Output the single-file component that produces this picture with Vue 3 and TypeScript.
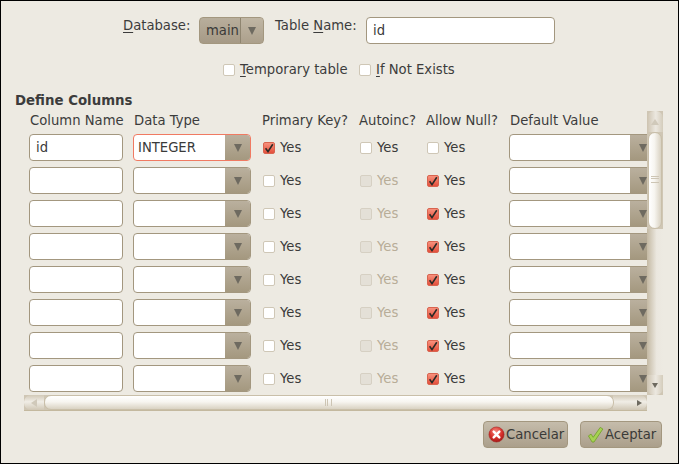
<script setup lang="ts">
const rows = Array.from({ length: 8 }, (_, i) => ({
  name: i === 0 ? 'id' : '',
  type: i === 0 ? 'INTEGER' : '',
  pk: i === 0,
  autoDisabled: i !== 0,
  allowNull: i !== 0,
  focus: i === 0,
}))
</script>

<template>
  <div class="win">
    <div class="top">
      <span class="lbl db"><u>D</u>atabase:</span>
      <span class="dbcombo"><span class="dbval">main</span><span class="dbarrow"><i class="tri"></i></span></span>
      <span class="lbl tn">Table <u>N</u>ame:</span>
      <span class="input tninput">id</span>
    </div>
    <div class="opts">
      <label class="opt"><span class="cb"></span><span class="optext tmp"><u>T</u>emporary table</span></label>
      <label class="opt"><span class="cb"></span><span class="optext"><u>I</u>f Not Exists</span></label>
    </div>
    <div class="section">Define Columns</div>
    <div class="scroller">
      <div class="viewport">
        <div class="inner">
          <div class="row head">
            <span class="c1">Column Name</span>
            <span class="c2">Data Type</span>
            <span class="c3">Primary Key?</span>
            <span class="c4">Autoinc?</span>
            <span class="c5">Allow Null?</span>
            <span class="c6">Default Value</span>
          </div>
          <div v-for="(r, i) in rows" :key="i" class="row">
            <span class="c1"><span class="input nameinput">{{ r.name }}</span></span>
            <span class="c2">
              <span class="combo" :class="{ focus: r.focus }"><span class="cval">{{ r.type }}</span><span class="carrow"><i class="tri"></i></span></span>
            </span>
            <span class="c3 chk"><span class="cb" :class="{ on: r.pk }"><svg v-if="r.pk" viewBox="0 0 12 12"><path d="M2.6 6.2 5 9.6 9.8 2.2" /></svg></span>Yes</span>
            <span class="c4 chk" :class="{ dis: r.autoDisabled }"><span class="cb"></span>Yes</span>
            <span class="c5 chk"><span class="cb" :class="{ on: r.allowNull }"><svg v-if="r.allowNull" viewBox="0 0 12 12"><path d="M2.6 6.2 5 9.6 9.8 2.2" /></svg></span>Yes</span>
            <span class="c6"><span class="combo wide"><span class="cval"></span><span class="carrow"><i class="tri"></i></span></span></span>
          </div>
        </div>
      </div>
      <div class="vbar">
        <span class="step up"><i class="mini mup"></i></span>
        <span class="vthumb"><span class="vgrip"></span></span>
        <span class="vtrack"></span>
        <span class="step down"><i class="mini mdown"></i></span>
      </div>
      <div class="hbar">
        <span class="hstep"><i class="mini mleft"></i></span>
        <span class="hthumb"><span class="hgrip"></span></span>
        <span class="hstep right"><i class="mini mright"></i></span>
      </div>
    </div>
    <div class="actions">
      <button class="btn cancel">
        <svg class="ico" viewBox="0 0 18 18">
          <defs>
            <radialGradient id="redg" cx="45%" cy="30%" r="75%"><stop offset="0" stop-color="#f58a80" /><stop offset=".55" stop-color="#d8322c" /><stop offset="1" stop-color="#9c1414" /></radialGradient>
          </defs>
          <circle cx="9" cy="9" r="8" fill="url(#redg)" stroke="#a32020" stroke-width=".6" />
          <path d="M6 6l6 6M12 6l-6 6" stroke="#fff" stroke-width="2.6" stroke-linecap="round" />
        </svg>Cancelar
      </button>
      <button class="btn ok">
        <svg class="ico" viewBox="0 0 18 18">
          <path d="M1.5 10.5 4.3 8.6 6.6 12 14 1.5 16.8 3.2 7.4 17 5.4 17Z" fill="#a6d252" stroke="#74a02c" stroke-width=".9" stroke-linejoin="round" />
        </svg>Aceptar
      </button>
    </div>
  </div>
</template>

<style>
html, body { margin: 0; padding: 0; background: #edeae2; }
</style>

<style scoped>
.win {
  width: 679px; height: 464px; box-sizing: border-box;
  border: 1px solid #000;
  background: #edeae2; color: #3c3c3c;
  font-family: "DejaVu Sans", sans-serif; font-size: 13.2px;
  display: flex; flex-direction: column; overflow: hidden;
}
u { text-underline-offset: 2px; text-decoration-thickness: 1px; }
.top { display: flex; align-items: flex-start; height: 27px; margin-top: 16px; padding-left: 122px; }
.lbl { line-height: 18px; }
.db { width: 66px; white-space: nowrap; }
.tn { width: 81px; white-space: nowrap; }
.dbcombo {
  margin-left: 10px; width: 65px; height: 27px; box-sizing: border-box; display: flex;
  border: 1px solid #a3977f; border-radius: 4px; overflow: hidden;
  background: linear-gradient(#b8ae9c, #a69a86);
}
.dbval { flex: 1; line-height: 25px; padding-left: 6px; color: #3a3a38; white-space: nowrap; }
.dbarrow { width: 22px; flex: none; border-left: 1px solid #8f8570; background: linear-gradient(#c0b6a4, #aca08c); display: flex; align-items: center; justify-content: center; }
.tri { width: 0; height: 0; border-left: 4px solid transparent; border-right: 4px solid transparent; border-top: 8px solid #6e6a60; display: block; }
.tn { margin-left: 11px; }
.input {
  display: block; box-sizing: border-box; height: 27px; background: #fff;
  border: 1px solid #a3977f; border-radius: 4px; padding-left: 6px; line-height: 25px; color: #3a3a3a;
}
.tninput { margin-left: 10px; width: 189px; }
.opts { display: flex; height: 20px; margin-top: 16px; padding-left: 222px; gap: 13px; }
.opt { display: flex; align-items: center; line-height: 18px; }
.tmp { width: 106px; white-space: nowrap; }
.cb {
  width: 12px; height: 12px; flex: none; box-sizing: border-box; margin-right: 5px;
  border: 1px solid #cfc7b6; border-radius: 2px; background: #fff; display: inline-block; position: relative;
}
.section { font-weight: bold; font-size: 13.33px; height: 17px; line-height: 17px; margin: 12px 0 0 14px; color: #3c3c3c; }
.scroller {
  display: grid; grid-template-columns: 623px 16px; grid-template-rows: 284px 16px;
  margin: 2px 0 0 23px; width: 639px;
}
.viewport { overflow: hidden; position: relative; }
.inner { width: 660px; }
.row { display: flex; align-items: center; height: 33px; padding-left: 5px; }
.row.head { height: 20px; align-items: flex-start; line-height: 20px; white-space: nowrap; }
.c1 { width: 104px; flex: none; }
.c2 { width: 129px; flex: none; }
.c3 { width: 97px; flex: none; }
.c4 { width: 67px; flex: none; }
.c5 { width: 83px; flex: none; }
.c6 { flex: none; }
.head .c1 { padding-left: 1px; box-sizing: border-box; }
.head .c2 { padding-left: 1px; box-sizing: border-box; }
.head .c6 { padding-left: 1px; }
.nameinput { width: 94px; }
.combo {
  display: flex; box-sizing: border-box; width: 118px; height: 27px;
  border: 1px solid #a3977f; border-radius: 4px; overflow: hidden; background: #fff;
}
.combo.focus { border-color: #f07a62; }
.combo.wide { width: 147px; }
.cval { flex: 1; padding-left: 4px; line-height: 25px; color: #3a3a3a; }
.carrow { width: 25px; flex: none; background: linear-gradient(#bab09e, #a4987f); display: flex; align-items: center; justify-content: center; }
.chk { display: flex; align-items: center; box-sizing: border-box; padding-left: 1px; color: #3a3a3a; }
.dis { color: #b8ad98; }
.dis .cb { background: #e4e0d7; border-color: #d6d0c3; }
.cb.on { background: linear-gradient(#f8907c, #e4503c); border-color: #d8644f; }
.cb svg { position: absolute; inset: -1px; width: 12px; height: 12px; }
.cb path { fill: none; stroke: #2a2a26; stroke-width: 1.6; }
.vbar {
  grid-column: 2; grid-row: 1; position: relative; overflow: hidden;
  background: #cfc6b4; display: flex; flex-direction: column;
}
.step { height: 21px; flex: none; display: flex; align-items: center; justify-content: center; }
.step.up { background: linear-gradient(90deg, #cdc3b0, #ece8e0 55%, #d4ccbb); border-radius: 7px 7px 0 0; }
.step.down { background: linear-gradient(90deg, #cdc3b0, #ece8e0 55%, #d4ccbb); height: 20px; border-radius: 0 0 7px 7px; }
.vthumb {
  height: 97px; flex: none; margin: 0 1px; box-sizing: border-box;
  border: 1px solid #c9bfa9; border-radius: 7px; position: relative;
  background: linear-gradient(90deg, #fff, #f7f5f0 45%, #d9d2c2);
}
.vgrip { position: absolute; left: 2px; right: 2px; top: 43px; height: 5px; border-top: 1px solid #cdc5b4; border-bottom: 1px solid #cdc5b4; }
.vgrip::after { content: ""; position: absolute; left: 0; right: 0; top: 1px; height: 1px; background: #cdc5b4; }
.vtrack { flex: 1; background: linear-gradient(90deg, #c4b9a3, #ebe7df 60%, #edeae2); }
.mini { display: block; width: 0; height: 0; }
.mup { border-left: 4px solid transparent; border-right: 4px solid transparent; border-bottom: 6px solid #d0c9ba; }
.mdown { border-left: 3px solid transparent; border-right: 3px solid transparent; border-top: 5px solid #6e6a60; }
.mleft { border-top: 4px solid transparent; border-bottom: 4px solid transparent; border-right: 6px solid #d0c9ba; }
.mright { border-top: 3px solid transparent; border-bottom: 3px solid transparent; border-left: 5px solid #6e6a60; }
.hbar {
  grid-column: 1; grid-row: 2; display: flex;
  background: #cfc6b4;
  border-bottom: 1px solid #c4b99f; box-sizing: border-box; height: 16px;
}
.hstep { width: 20px; flex: none; display: flex; align-items: center; justify-content: center; background: linear-gradient(#d2c9b7, #f0ede6 45%, #d0c7b5); border-radius: 7px 0 0 7px; }
.hstep.right { width: 34px; border-radius: 0 7px 7px 0; justify-content: flex-end; padding-right: 5px; box-sizing: border-box; }
.hthumb {
  flex: 1; box-sizing: border-box; margin-right: -1px; position: relative; z-index: 1;
  border: 1px solid #c9bfa9; border-radius: 7px;
  background: linear-gradient(#fff, #f7f5f0 45%, #d9d2c2);
}
.hgrip { position: absolute; left: 280px; top: 3px; bottom: 3px; width: 5px; border-left: 1px solid #cdc5b4; border-right: 1px solid #cdc5b4; }
.hgrip::after { content: ""; position: absolute; top: 0; bottom: 0; left: 1px; width: 1px; background: #cdc5b4; }
.actions { display: flex; justify-content: flex-end; gap: 12px; margin-top: 10px; padding-right: 16px; }
.btn {
  height: 27px; box-sizing: border-box; display: flex; align-items: center; padding: 0 0 0 4px;
  border: 1px solid #a3977f; border-radius: 4px; background: linear-gradient(#c5bcab, #ab9f8b);
  font: inherit; color: #3a3a38; gap: 1px;
}
.btn.cancel { width: 85px; }
.btn.ok { width: 82px; padding-left: 6px; }
.ico { width: 17px; height: 17px; flex: none; }
</style>
